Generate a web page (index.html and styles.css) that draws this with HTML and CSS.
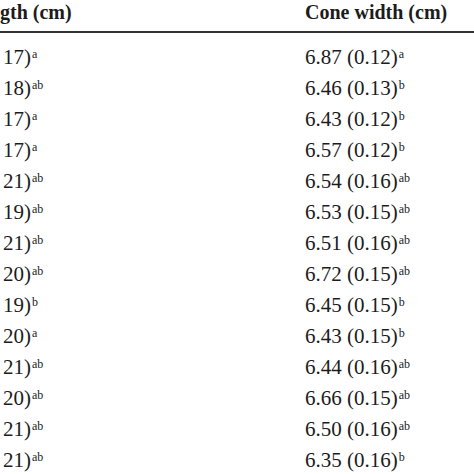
FILE: index.html
```html
<!DOCTYPE html>
<html lang="en">

<head>
	<meta charset="utf-8">
	<title>Cone measurements</title>
	<link rel="stylesheet" href="styles.css">
</head>

<body>
	<div class="tabel">
		<div class="head venstre">gth (cm)</div>
		<div class="head hoejre">Cone width (cm)</div>

		<div class="raekker">
			<div class="venstre">17)<sup>a</sup></div>
			<div class="hoejre">6.87 (0.12)<sup>a</sup></div>

			<div class="venstre">18)<sup>ab</sup></div>
			<div class="hoejre">6.46 (0.13)<sup>b</sup></div>

			<div class="venstre">17)<sup>a</sup></div>
			<div class="hoejre">6.43 (0.12)<sup>b</sup></div>

			<div class="venstre">17)<sup>a</sup></div>
			<div class="hoejre">6.57 (0.12)<sup>b</sup></div>

			<div class="venstre">21)<sup>ab</sup></div>
			<div class="hoejre">6.54 (0.16)<sup>ab</sup></div>

			<div class="venstre">19)<sup>ab</sup></div>
			<div class="hoejre">6.53 (0.15)<sup>ab</sup></div>

			<div class="venstre">21)<sup>ab</sup></div>
			<div class="hoejre">6.51 (0.16)<sup>ab</sup></div>

			<div class="venstre">20)<sup>ab</sup></div>
			<div class="hoejre">6.72 (0.15)<sup>ab</sup></div>

			<div class="venstre">19)<sup>b</sup></div>
			<div class="hoejre">6.45 (0.15)<sup>b</sup></div>

			<div class="venstre">20)<sup>a</sup></div>
			<div class="hoejre">6.43 (0.15)<sup>b</sup></div>

			<div class="venstre">21)<sup>ab</sup></div>
			<div class="hoejre">6.44 (0.16)<sup>ab</sup></div>

			<div class="venstre">20)<sup>ab</sup></div>
			<div class="hoejre">6.66 (0.15)<sup>ab</sup></div>

			<div class="venstre">21)<sup>ab</sup></div>
			<div class="hoejre">6.50 (0.16)<sup>ab</sup></div>

			<div class="venstre">21)<sup>ab</sup></div>
			<div class="hoejre">6.35 (0.16)<sup>b</sup></div>
		</div>
	</div>
</body>

</html>
```

FILE: styles.css
```css
* {
	box-sizing: border-box;
}

body {
	margin: 0;
	background: #fff;
	overflow: hidden;
}

.tabel {
	font-family: "Liberation Serif", serif;
	font-size: 21px;
	color: #1c1c1c;
	display: grid;
	grid-template-columns: 305px 1fr;
}

.tabel .head {
	font-size: 20px;
	font-weight: bold;
	line-height: 24px;
	padding: 0 0 7px;
	border-bottom: 2px solid #333;
}

.tabel .raekker {
	grid-column: 1 / span 2;
	display: grid;
	grid-template-columns: 305px 1fr;
	grid-auto-rows: 31px;
	padding: 9px 0 0;
}

.tabel .raekker .venstre {
	padding: 0 0 0 3px;
}

.tabel .raekker div {
	line-height: 31px;
	white-space: nowrap;
}

sup {
	font-size: 12px;
	vertical-align: 6px;
	line-height: 0;
	margin: 0 0 0 1px;
}
```
